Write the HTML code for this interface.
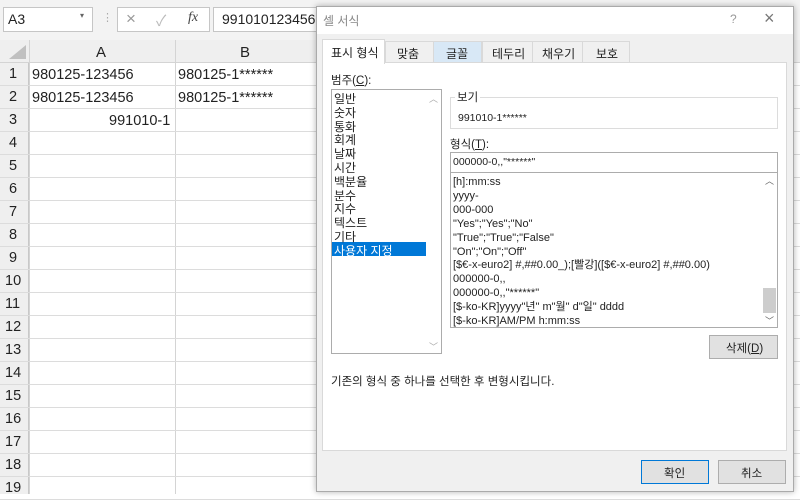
<!DOCTYPE html>
<html><head><meta charset="utf-8"><style>
*{margin:0;padding:0;box-sizing:border-box}
body{width:800px;height:494px;overflow:hidden;background:#fff;font-family:"Liberation Sans","Noto Sans CJK KR",sans-serif;position:relative;color:#222}
.a{position:absolute}
.t{position:absolute;white-space:nowrap}
</style></head><body>
<div class="a" style="left:0;top:0;width:800px;height:40px;background:#f3f3f3"></div>
<div class="a" style="left:3px;top:7px;width:90px;height:25px;background:#fff;border:1px solid #c6c6c6"></div>
<div class="t" style="left:8px;top:11px;font-size:14px">A3</div>
<div class="t" style="left:80px;top:11px;font-size:8px;color:#666">▾</div>
<div class="t" style="left:102px;top:11px;font-size:11px;color:#aaa">⋮</div>
<div class="a" style="left:117px;top:7px;width:93px;height:25px;background:#fff;border:1px solid #c6c6c6"></div>
<div class="t" style="left:126px;top:9px;font-size:17px;color:#999">×</div>
<div class="t" style="left:156px;top:10px;font-size:15px;color:#bbb">✓</div>
<div class="t" style="left:188px;top:10px;font-size:14px;font-style:italic;font-family:'Liberation Serif',serif;color:#444">fx</div>
<div class="a" style="left:213px;top:7px;width:120px;height:25px;background:#fff;border:1px solid #c6c6c6"></div>
<div class="t" style="left:222px;top:11px;font-size:14px">9910101234567</div>
<div class="a" style="left:0;top:40px;width:800px;height:23px;background:#efefef;border-bottom:1px solid #d4d4d4"></div>
<div class="a" style="left:0;top:63px;width:29px;height:431px;background:#efefef;border-right:1px solid #c8c8c8"></div>
<div class="a" style="left:9px;top:45px;width:0;height:0;border-left:17px solid transparent;border-bottom:14px solid #c0c0c0"></div>
<div class="a" style="left:29px;top:40px;width:1px;height:454px;background:#d4d4d4"></div>
<div class="a" style="left:175px;top:40px;width:1px;height:454px;background:#d4d4d4"></div>
<div class="t" style="left:96px;top:44px;font-size:15px">A</div>
<div class="t" style="left:240px;top:44px;font-size:15px">B</div>
<div id="rows"></div>
<div class="t" style="left:32px;top:67px;font-size:14.5px">980125-123456</div>
<div class="t" style="left:178px;top:67px;font-size:14.5px">980125-1******</div>
<div class="t" style="left:32px;top:90px;font-size:14.5px">980125-123456</div>
<div class="t" style="left:178px;top:90px;font-size:14.5px">980125-1******</div>
<div class="t" style="left:109px;top:113px;font-size:14.5px">991010-1</div>
<script>
var h='';for(var i=1;i<=19;i++){var y=63+23*(i-1);h+='<div class="a" style="left:0;top:'+(y+22)+'px;width:800px;height:1px;background:#dcdcdc"></div><div class="t" style="left:'+(i<10?9:5)+'px;top:'+(y+3)+'px;font-size:14.5px">'+i+'</div>';}
document.getElementById('rows').innerHTML=h;
</script>
<div class="a" style="left:316px;top:6px;width:478px;height:486px;background:#f0f0f0;border:1px solid #aaa;box-shadow:0 0 6px rgba(0,0,0,.3)"></div>
<div class="a" style="left:317px;top:7px;width:476px;height:27px;background:#fff"></div>
<div class="t" style="left:323px;top:12px;font-size:12px;color:#888">셀 서식</div>
<div class="t" style="left:730px;top:12px;font-size:12px;color:#999">?</div>
<div class="t" style="left:764px;top:8px;font-size:18px;color:#777">×</div>
<div class="a" style="left:385px;top:41px;width:245px;height:22px;background:#f0f0f0;border:1px solid #d9d9d9"></div>
<div class="a" style="left:433px;top:41px;width:49px;height:22px;background:#d8e8f6;border:1px solid #d9d9d9"></div>
<div class="a" style="left:482px;top:41px;width:1px;height:22px;background:#d9d9d9"></div>
<div class="a" style="left:532px;top:41px;width:1px;height:22px;background:#d9d9d9"></div>
<div class="a" style="left:582px;top:41px;width:1px;height:22px;background:#d9d9d9"></div>
<div class="a" style="left:322px;top:62px;width:465px;height:389px;background:#fff;border:1px solid #d9d9d9"></div>
<div class="a" style="left:322px;top:39px;width:63px;height:25px;background:#fff;border:1px solid #d9d9d9;border-bottom:none"></div>
<div class="t" style="left:331px;top:44px;font-size:12px">표시 형식</div>
<div class="t" style="left:397px;top:45px;font-size:12px">맞춤</div>
<div class="t" style="left:446px;top:45px;font-size:12px">글꼴</div>
<div class="t" style="left:492px;top:45px;font-size:12px">테두리</div>
<div class="t" style="left:542px;top:45px;font-size:12px">채우기</div>
<div class="t" style="left:596px;top:45px;font-size:12px">보호</div>
<div class="t" style="left:331px;top:72px;font-size:11.5px">범주(<u>C</u>):</div>
<div class="a" style="left:331px;top:89px;width:111px;height:265px;border:1px solid #acacac;background:#fff"></div>
<div class="t" style="left:429px;top:92px;font-size:9px;color:#aaa">︿</div>
<div class="t" style="left:429px;top:340px;font-size:9px;color:#aaa">﹀</div>
<div class="a" style="left:332px;top:242px;width:94px;height:14px;background:#0078d7"></div>
<div id="cat"></div>
<div class="a" style="left:450px;top:97px;width:328px;height:32px;border:1px solid #dcdcdc"></div>
<div class="t" style="left:455px;top:89px;font-size:11.5px;background:#fff;padding:0 2px">보기</div>
<div class="t" style="left:458px;top:112px;font-size:10.5px">991010-1******</div>
<div class="t" style="left:450px;top:136px;font-size:11.5px">형식(<u>T</u>):</div>
<div class="a" style="left:450px;top:152px;width:328px;height:21px;border:1px solid #acacac;background:#fff"></div>
<div class="t" style="left:453px;top:156px;font-size:10.5px">000000-0,,"******"</div>
<div class="a" style="left:450px;top:172px;width:328px;height:156px;border:1px solid #acacac;background:#fff"></div>
<div class="a" style="left:763px;top:288px;width:13px;height:25px;background:#cdcdcd"></div>
<div class="t" style="left:765px;top:174px;font-size:9px;color:#666">︿</div>
<div class="t" style="left:765px;top:314px;font-size:9px;color:#666">﹀</div>
<div id="fmt"></div>
<div class="a" style="left:709px;top:335px;width:69px;height:24px;background:#e1e1e1;border:1px solid #adadad"></div>
<div class="t" style="left:726px;top:340px;font-size:11.5px">삭제(<u>D</u>)</div>
<div class="t" style="left:331px;top:373px;font-size:11.5px">기존의 형식 중 하나를 선택한 후 변형시킵니다.</div>
<div class="a" style="left:641px;top:460px;width:68px;height:24px;background:#e1e1e1;border:1px solid #0078d7"></div>
<div class="t" style="left:664px;top:465px;font-size:11.5px">확인</div>
<div class="a" style="left:718px;top:460px;width:68px;height:24px;background:#e1e1e1;border:1px solid #adadad"></div>
<div class="t" style="left:741px;top:465px;font-size:11.5px">취소</div>
<script>
var c=['일반','숫자','통화','회계','날짜','시간','백분율','분수','지수','텍스트','기타','사용자 지정'],h='';
for(var i=0;i<c.length;i++)h+='<div class="t" style="left:334px;top:'+(92+13.8*i)+'px;font-size:12px;line-height:14px;'+(i==11?'color:#fff':'')+'">'+c[i]+'</div>';
document.getElementById('cat').innerHTML=h;
var f=['[h]:mm:ss','yyyy-','000-000','"Yes";"Yes";"No"','"True";"True";"False"','"On";"On";"Off"','[$€-x-euro2] #,##0.00_);[빨강]([$€-x-euro2] #,##0.00)','000000-0,,','000000-0,,"******"','[$-ko-KR]yyyy"년" m"월" d"일" dddd','[$-ko-KR]AM/PM h:mm:ss'];h='';
for(var i=0;i<f.length;i++)h+='<div class="t" style="left:453px;top:'+(175+13.9*i)+'px;font-size:11px;line-height:14px">'+f[i].replace(/</g,'&lt;')+'</div>';
document.getElementById('fmt').innerHTML=h;
</script>
</body></html>
